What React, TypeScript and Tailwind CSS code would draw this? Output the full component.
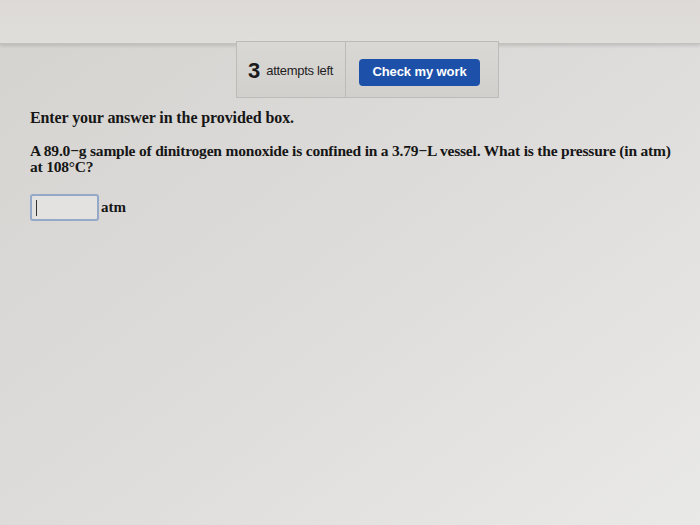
export default function App() {
  return (
    <div className="flex h-[525px] w-[700px] flex-col overflow-hidden bg-linear-to-br from-[#d5d3d0] via-[#dedcda] to-[#e9e9e8]">
      {/* top strip */}
      <div className="h-[44px] shrink-0 border-b border-[#c4c1be] bg-linear-to-b from-[#dcd9d6] to-[#e0dedb] shadow-[0_2px_3px_rgba(0,0,0,0.12)]" />

      {/* attempts / check panel */}
      <div className="-mt-[3px] flex justify-center pl-[35px]">
        <div className="flex h-[57px] border border-[#bdbab7] bg-linear-to-b from-[#dad8d5] to-[#d2d0cd]">
          <div className="flex w-[109px] items-center gap-[6px] border-r border-[#bdbab7] pl-[11px] pt-[2px]">
            <span className="text-[22px] font-bold leading-none text-[#1a1a1a]" style={{ fontFamily: '"Liberation Sans", Arial, sans-serif' }}>
              3
            </span>
            <span className="text-[13px] tracking-[-0.3px] text-[#1e1e1e]" style={{ fontFamily: '"Liberation Sans", Arial, sans-serif' }}>
              attempts left
            </span>
          </div>
          <div className="flex w-[152px] items-center pl-[13px] pt-[5px]">
            <button
              className="h-[27px] w-[121px] rounded-[4px] bg-[#1d50a8] text-[13px] font-bold tracking-[-0.1px] text-white"
              style={{ fontFamily: '"Liberation Sans", Arial, sans-serif' }}
            >
              Check my work
            </button>
          </div>
        </div>
      </div>

      {/* question */}
      <div className="pl-[30px] pt-[10px] text-[#161616]" style={{ fontFamily: '"Liberation Serif", "Times New Roman", serif' }}>
        <p className="text-[16px] font-bold leading-[20px] tracking-[-0.1px]">Enter your answer in the provided box.</p>
        <p className="mt-[15px] text-[15.5px] font-bold leading-[16px] tracking-[-0.2px]">
          <span className="whitespace-nowrap">
            A 89.0−g sample of dinitrogen monoxide is confined in a 3.79−L vessel. What is the pressure (in atm)
          </span>
          <br />
          at 108°C?
        </p>
        <div className="mt-[19px] flex items-center gap-[2px]">
          <div className="flex h-[27px] w-[69px] items-center rounded-[3px] border-2 border-[#93a9c7] bg-[#e3e2e0] pl-[4px]">
            <span className="h-[16px] w-px bg-[#333]" />
          </div>
          <span className="text-[15px] font-bold">atm</span>
        </div>
      </div>
    </div>
  );
}
